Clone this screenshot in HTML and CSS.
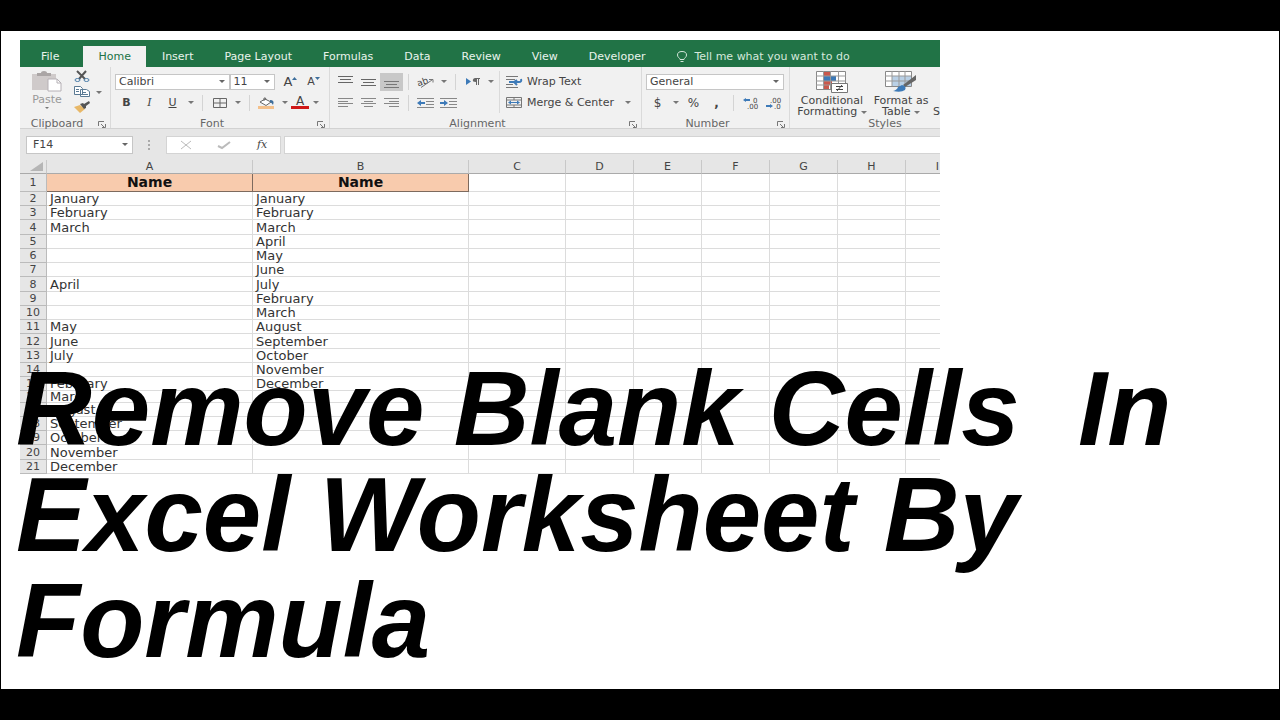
FILE: index.html
```
<!DOCTYPE html>
<html lang="en">
<head>
    <meta charset="UTF-8">
    <meta name="viewport" content="width=device-width, initial-scale=1.0">
    <title>Remove Blank Cells In Excel Worksheet By Formula</title>
    <link rel="stylesheet" href="styles.css">
</head>

<body>
    <main class="slide">
        <section class="excel">
            <nav class="tabs">
                <button class="tab file">File</button>
                <button class="tab active">Home</button>
                <button class="tab">Insert</button>
                <button class="tab">Page Layout</button>
                <button class="tab">Formulas</button>
                <button class="tab">Data</button>
                <button class="tab">Review</button>
                <button class="tab">View</button>
                <button class="tab">Developer</button>
                <button class="tab tell">
                    <svg width="12" height="12" viewBox="0 0 12 12" fill="none" stroke="#d5e8dc"><path d="M4 8.500C4 7 1.500 6.500 1.500 4A4.500 3.500 0 0 1 10.500 4C10.500 6.500 8 7 8 8.500ZM4.500 10.500h3"/></svg>
                    Tell me what you want to do
                </button>
            </nav>

            <div class="ribbon">
                <!-- clipboard -->
                <div class="group clipboard">
                    <div class="tools">
                        <button class="paste">
                            <svg width="32" height="21" viewBox="0 0 32 21"><path fill="#cfcaca" d="M1 3h24v16H1z"/><path fill="#aaa5a5" d="M6 2h4q0-2 3-2t3 2h4v3H6z"/><path fill="#fff" stroke="#b5b0b5" d="M17 8h9l4 4v8H17z"/><path fill="none" stroke="#b5b0b5" d="M26 8v4h4"/></svg>
                            Paste
                            <span class="caret"></span>
                        </button>
                        <div class="clips">
                            <button aria-label="Cut"><svg width="16" height="12" viewBox="0 0 16 12" fill="none"><path stroke="#555" stroke-width="2" d="M3 0l8 8M12 0L5 8"/><ellipse cx="3.500" cy="9" rx="2.500" ry="1.500" stroke="#4a7ca8"/><ellipse cx="12.500" cy="9" rx="2.500" ry="1.500" stroke="#4a7ca8"/></svg></button>
                            <button aria-label="Copy"><svg width="16" height="12" viewBox="0 0 16 12" fill="#fff" stroke="#5b7a94"><path d="M.5.5h6l2 2v6h-8zM6.500 3.500h6l3 2v5h-9z"/><path d="M2 3.500h3M2 5.500h3M8 6.500h4M8 8.500h6"/></svg><span class="caret"></span></button>
                            <button aria-label="Format Painter"><svg width="16" height="12" viewBox="0 0 16 12"><path fill="#e8b868" d="M0 6l6-2 5 4-5 4z"/><path fill="#555" d="M6 3l3-1 1 1 5-3 1 2-4 3v2l-2 1z"/></svg></button>
                        </div>
                    </div>
                    <div class="foot"><span>Clipboard</span><button class="launch" aria-label="Clipboard options"><svg width="8" height="7" viewBox="0 0 8 7" fill="none" stroke="#777"><path d="M.5 5V.5H6M3 3l3 3M7.500 3v3.500H4"/></svg></button></div>
                </div>

                <!-- font -->
                <div class="group font">
                    <div class="row">
                        <select class="family" aria-label="Font"><option>Calibri</option></select>
                        <select class="size" aria-label="Font size"><option>11</option></select>
                        <button class="tool grow" aria-label="Increase font size">A<svg width="5" height="4" viewBox="0 0 5 4"><path fill="#3d6e9c" d="M0 3l2.500-3L5 3z"/></svg></button>
                        <button class="tool shrink" aria-label="Decrease font size">A<svg width="5" height="4" viewBox="0 0 5 4"><path fill="#3d6e9c" d="M0 0h5L2.500 3z"/></svg></button>
                    </div>
                    <div class="row">
                        <button class="tool bold">B</button>
                        <button class="tool italic">I</button>
                        <button class="tool underline">U</button>
                        <button class="drop" aria-label="Underline styles"><span class="caret"></span></button>
                        <i class="line"></i>
                        <button class="tool" aria-label="Borders"><svg width="14" height="10" viewBox="0 0 14 10" fill="none" stroke="#666"><path d="M.5.5h13v9H.5zM7 0v10M0 5h14"/></svg></button>
                        <button class="drop" aria-label="Border styles"><span class="caret"></span></button>
                        <i class="line"></i>
                        <button class="tool" aria-label="Fill color"><svg width="17" height="12" viewBox="0 0 17 12"><path fill="#fff" stroke="#666" d="M2 5l5-3 6 3-5 3.500zM6 4V1q2-1 2 2"/><path fill="#3d6e9c" d="M12 3q5 0 3 5-1-2-3-3z"/><path fill="#f4c08a" d="M0 9h16v3H0z"/></svg></button>
                        <button class="drop" aria-label="Fill colors"><span class="caret"></span></button>
                        <button class="tool color">A</button>
                        <button class="drop" aria-label="Font colors"><span class="caret"></span></button>
                    </div>
                    <div class="foot"><span>Font</span><button class="launch" aria-label="Font options"><svg width="8" height="7" viewBox="0 0 8 7" fill="none" stroke="#777"><path d="M.5 5V.5H6M3 3l3 3M7.500 3v3.500H4"/></svg></button></div>
                </div>

                <!-- alignment -->
                <div class="group alignment">
                    <div class="tools">
                        <div class="aligns">
                            <div class="row">
                                <button class="tool" aria-label="Top align"><svg width="15" height="12" viewBox="0 0 15 12" stroke="#666"><path d="M0 .5h15M2 3.500h11M0 6.500h15"/></svg></button>
                                <button class="tool" aria-label="Middle align"><svg width="15" height="12" viewBox="0 0 15 12" stroke="#666"><path d="M0 3.500h15M2 6.500h11M0 9.500h15"/></svg></button>
                                <button class="tool pressed" aria-label="Bottom align"><svg width="15" height="12" viewBox="0 0 15 12" stroke="#777"><path d="M0 5.500h15M2 8.500h11M0 11.500h15"/></svg></button>
                                <i class="line"></i>
                                <button class="tool" aria-label="Orientation"><svg width="17" height="12" viewBox="0 0 17 12"><text x="0" y="9" font-size="9" transform="rotate(-20 5 6)" fill="#444">ab</text><path fill="none" stroke="#777" d="M4 11.500L15 4M12 3.500h4v3"/></svg></button>
                                <button class="drop" aria-label="Orientations"><span class="caret"></span></button>
                                <i class="line"></i>
                                <button class="tool" aria-label="Text direction"><svg width="14" height="8" viewBox="0 0 14 8"><path fill="#3d7ab8" d="M0 0l5 3.500L0 7z"/><path fill="#666" d="M14 0v1h-1v6h-1V1h-1v6h-1V4Q6 4 7 1.500 7.500 0 9 0z"/></svg></button>
                                <button class="drop" aria-label="Text directions"><span class="caret"></span></button>
                            </div>
                            <div class="row">
                                <button class="tool" aria-label="Align left"><svg width="15" height="9" viewBox="0 0 15 9" stroke="#888"><path d="M0 .5h15M0 3.500h10M0 5.500h15M0 8.500h10"/></svg></button>
                                <button class="tool" aria-label="Center"><svg width="15" height="9" viewBox="0 0 15 9" stroke="#888"><path d="M0 .5h15M3 3.500h9M0 5.500h15M3 8.500h9"/></svg></button>
                                <button class="tool" aria-label="Align right"><svg width="15" height="9" viewBox="0 0 15 9" stroke="#888"><path d="M0 .5h15M5 3.500h10M0 5.500h15M5 8.500h10"/></svg></button>
                                <i class="line"></i>
                                <button class="tool" aria-label="Decrease indent"><svg width="17" height="10" viewBox="0 0 17 10"><path stroke="#888" d="M0 .5h17M9 3.500h8M9 6.500h8M0 9.500h17"/><path fill="#3d7ab8" d="M0 5l4-3v2h4v2H4v2z"/></svg></button>
                                <button class="tool" aria-label="Increase indent"><svg width="17" height="10" viewBox="0 0 17 10"><path stroke="#888" d="M0 .5h17M9 3.500h8M9 6.500h8M0 9.500h17"/><path fill="#3d7ab8" d="M8 5L4 2v2H0v2h4v2z"/></svg></button>
                            </div>
                        </div>
                        <div class="wraps">
                            <div class="row"><button class="wide"><svg width="17" height="12" viewBox="0 0 17 12" fill="none"><path stroke="#777" d="M0 .5h12M0 3.500h9M0 8.500h7M0 11.500h12"/><path stroke="#3d7ab8" stroke-width="2" d="M3 6h10q3 0 2-3M11 4L8 6l3 3"/></svg>Wrap Text</button></div>
                            <div class="row"><button class="wide"><svg width="17" height="11" viewBox="0 0 17 11" fill="none"><path stroke="#777" d="M.5.5h15v10H.5zM0 3h16M0 8h16M8 0v3M8 8v3"/><path fill="#3d7ab8" d="M2 5.500l3-2v4zM14 5.500l-3-2v4z"/><path stroke="#3d7ab8" d="M4 5.500h8"/></svg>Merge &amp; Center</button><button class="drop" aria-label="Merge options"><span class="caret"></span></button></div>
                        </div>
                    </div>
                    <div class="foot"><span>Alignment</span><button class="launch" aria-label="Alignment options"><svg width="8" height="7" viewBox="0 0 8 7" fill="none" stroke="#777"><path d="M.5 5V.5H6M3 3l3 3M7.500 3v3.500H4"/></svg></button></div>
                </div>

                <!-- number -->
                <div class="group number">
                    <div class="row"><select class="format" aria-label="Number format"><option>General</option></select></div>
                    <div class="row">
                        <button class="tool">$</button>
                        <button class="drop" aria-label="Currencies"><span class="caret"></span></button>
                        <button class="tool">%</button>
                        <button class="tool comma">,</button>
                        <i class="line"></i>
                        <button class="tool" aria-label="Increase decimal"><svg width="16" height="12" viewBox="0 0 16 12" font-size="7" fill="#444"><path fill="#3d7ab8" d="M0 3l3-2v1h4v2H3v1z"/><text x="10" y="6">0</text><text x="4" y="12">.00</text></svg></button>
                        <button class="tool" aria-label="Decrease decimal"><svg width="16" height="12" viewBox="0 0 16 12" font-size="7" fill="#444"><path fill="#3d7ab8" d="M7 9L4 7v1H0v2h4v1z"/><text x="4" y="6">.00</text><text x="8" y="12">.0</text></svg></button>
                    </div>
                    <div class="foot"><span>Number</span><button class="launch" aria-label="Number options"><svg width="8" height="7" viewBox="0 0 8 7" fill="none" stroke="#777"><path d="M.5 5V.5H6M3 3l3 3M7.500 3v3.500H4"/></svg></button></div>
                </div>

                <!-- styles -->
                <div class="group styles">
                    <div class="tools">
                        <button class="big conditional">
                            <svg width="32" height="22" viewBox="0 0 32 22"><path fill="#fff" stroke="#888" d="M.5.500h29v18H.5z"/><path fill="#c9584c" d="M8 1h6v4H8zM8 10h8v4H8zM8 14h5v4H8z"/><path fill="#3d7ab8" d="M8 5h12v5H8z"/><path fill="none" stroke="#999" d="M7.500 0v18M14.500 0v18M22.500 0v18M0 5h30M0 10h30M0 14h30"/><path fill="#fff" stroke="#777" d="M15.500 12.500h16v9h-16z"/><path stroke="#444" d="M20 15.500h7M20 18.500h7M21 20l5-6"/></svg>
                            <span>Conditional</span><span>Formatting <span class="caret"></span></span>
                        </button>
                        <button class="big table">
                            <svg width="32" height="22" viewBox="0 0 32 22"><path fill="#fff" stroke="#888" d="M.5.500h26v15H.5z"/><path fill="#b9d0e6" d="M7 5h19v10H7z"/><path fill="none" stroke="#999" d="M7 0v15M14 0v15M20 0v15M0 5h26M0 10h26"/><path fill="#666" d="M31 4v5l-11 7-2-2z"/><path fill="#3d7ab8" d="M17 14q5 1 3 5-4 3-12 1 4-1 5-4z"/></svg>
                            <span>Format as</span><span>Table <span class="caret"></span></span>
                        </button>
                        <button class="big cells">
                            <svg width="20" height="22" viewBox="0 0 20 22"><path fill="#fff" stroke="#777" d="M1.500.5h18v14h-18z"/></svg>
                            <span>&nbsp;</span><span>Styles</span>
                        </button>
                    </div>
                    <div class="foot"><span>Styles</span></div>
                </div>
            </div>

            <div class="formula-bar">
                <select class="cell-name" aria-label="Name box"><option>F14</option></select>
                <svg class="dots" width="2" height="10" viewBox="0 0 2 10" fill="#aaa"><path d="M0 0h2v2H0zM0 4h2v2H0zM0 8h2v2H0z"/></svg>
                <div class="entry">
                    <button aria-label="Cancel"><svg width="12" height="8" viewBox="0 0 12 8" stroke="#bbb"><path d="M1 0l10 8M11 0L1 8"/></svg></button>
                    <button aria-label="Enter"><svg width="14" height="8" viewBox="0 0 14 8" fill="none" stroke="#bbb" stroke-width="2"><path d="M1 5l4 2 8-6"/></svg></button>
                    <button class="fx">fx</button>
                </div>
                <input type="text" aria-label="Formula">
            </div>

            <table class="sheet">
                <colgroup>
                    <col class="c-num"><col class="c-a"><col class="c-b"><col class="c-c"><col class="c-n"><col class="c-n"><col class="c-n"><col class="c-n"><col class="c-n"><col>
                </colgroup>
                <thead>
                    <tr><th class="corner"><svg width="13" height="9" viewBox="0 0 13 9"><path fill="#b5b5b5" d="M13 0v9H0z"/></svg></th><th>A</th><th>B</th><th>C</th><th>D</th><th>E</th><th>F</th><th>G</th><th>H</th><th class="last">I</th></tr>
                </thead>
                <tbody>
                    <tr class="names"><th>1</th><td>Name</td><td>Name</td><td></td><td></td><td></td><td></td><td></td><td></td><td></td></tr>
                    <tr><th>2</th><td>January</td><td>January</td><td></td><td></td><td></td><td></td><td></td><td></td><td></td></tr>
                    <tr><th>3</th><td>February</td><td>February</td><td></td><td></td><td></td><td></td><td></td><td></td><td></td></tr>
                    <tr><th>4</th><td>March</td><td>March</td><td></td><td></td><td></td><td></td><td></td><td></td><td></td></tr>
                    <tr><th>5</th><td></td><td>April</td><td></td><td></td><td></td><td></td><td></td><td></td><td></td></tr>
                    <tr><th>6</th><td></td><td>May</td><td></td><td></td><td></td><td></td><td></td><td></td><td></td></tr>
                    <tr><th>7</th><td></td><td>June</td><td></td><td></td><td></td><td></td><td></td><td></td><td></td></tr>
                    <tr><th>8</th><td>April</td><td>July</td><td></td><td></td><td></td><td></td><td></td><td></td><td></td></tr>
                    <tr><th>9</th><td></td><td>February</td><td></td><td></td><td></td><td></td><td></td><td></td><td></td></tr>
                    <tr><th>10</th><td></td><td>March</td><td></td><td></td><td></td><td></td><td></td><td></td><td></td></tr>
                    <tr><th>11</th><td>May</td><td>August</td><td></td><td></td><td></td><td></td><td></td><td></td><td></td></tr>
                    <tr><th>12</th><td>June</td><td>September</td><td></td><td></td><td></td><td></td><td></td><td></td><td></td></tr>
                    <tr><th>13</th><td>July</td><td>October</td><td></td><td></td><td></td><td></td><td></td><td></td><td></td></tr>
                    <tr><th>14</th><td></td><td>November</td><td></td><td></td><td></td><td></td><td></td><td></td><td></td></tr>
                    <tr><th>15</th><td>February</td><td>December</td><td></td><td></td><td></td><td></td><td></td><td></td><td></td></tr>
                    <tr class="short"><th>16</th><td>March</td><td></td><td></td><td></td><td></td><td></td><td></td><td></td><td></td></tr>
                    <tr><th>17</th><td>August</td><td></td><td></td><td></td><td></td><td></td><td></td><td></td><td></td></tr>
                    <tr><th>18</th><td>September</td><td></td><td></td><td></td><td></td><td></td><td></td><td></td><td></td></tr>
                    <tr><th>19</th><td>October</td><td></td><td></td><td></td><td></td><td></td><td></td><td></td><td></td></tr>
                    <tr><th>20</th><td>November</td><td></td><td></td><td></td><td></td><td></td><td></td><td></td><td></td></tr>
                    <tr><th>21</th><td>December</td><td></td><td></td><td></td><td></td><td></td><td></td><td></td><td></td></tr>
                </tbody>
            </table>
        </section>

        <h1>Remove Blank Cells  In Excel Worksheet By Formula</h1>
    </main>
</body>
</html>
```

FILE: styles.css
```
* {
    box-sizing: border-box;
}
body {
    margin: 0;
    padding: 31px 1px;
    background-color: #000;
    font-family: "DejaVu Sans", Verdana, sans-serif;
    font-size: 11px;
    color: #444;
}
.slide {
    position: relative;
    min-height: calc(100vh - 62px);
    padding: 9px 19px;
    background-color: #fff;
}
/* title lies over the lower part of the sheet */
h1 {
    position: absolute;
    top: 325px;
    left: 15px;
    right: 0;
    margin: 0;
    font-family: "Liberation Sans", Arial, sans-serif;
    font-size: 105px;
    line-height: 106px;
    font-style: italic;
    font-weight: bold;
    color: #000;
    white-space: pre-wrap;
}
.excel {
    width: 920px;
    max-width: 100%;
    overflow: hidden;
    background-color: #e6e6e6;
}
button {
    display: flex;
    align-items: center;
    justify-content: center;
    flex-shrink: 0;
    padding: 0;
    border: none;
    background: none;
    font: inherit;
    color: inherit;
    white-space: nowrap;
}
svg {
    overflow: visible;
}
select {
    height: 16px;
    padding: 0 3px;
    border: 1px solid #c6c6c6;
    border-radius: 0;
    appearance: none;
    background: #fff url("data:image/svg+xml,%3Csvg xmlns='http://www.w3.org/2000/svg' width='6' height='3'%3E%3Cpath fill='%23666' d='M0 0h6L3 3z'/%3E%3C/svg%3E") no-repeat right 4px center;
    font: inherit;
    color: #444;
}
.caret {
    display: inline-block;
    border: 3px solid transparent;
    border-top-color: #777;
    border-bottom: none;
    vertical-align: middle;
}

/* tabs */
.tabs {
    display: flex;
    gap: 1px;
    height: 27px;
    padding: 6px 6px 0;
    background-color: #217346;
    color: #e9f3ed;
}
.tab {
    padding: 0 15px;
}
.tab.file {
    margin-right: 8px;
}
.tab.active {
    background-color: #f1f1f1;
    color: #217346;
}
.tab.tell {
    gap: 6px;
    color: #d5e8dc;
}

/* ribbon */
.ribbon {
    display: flex;
    height: 62px;
    background-color: #f1f1f1;
    border-bottom: 1px solid #d2d2d2;
}
.group {
    flex-shrink: 0;
    padding: 4px 4px 0;
    border-right: 1px solid #dadada;
}
.group.clipboard {
    width: 91px;
}
.group.font {
    width: 219px;
}
.group.alignment {
    width: 312px;
}
.group.number {
    width: 148px;
}
.group.styles {
    width: 190px;
    border: none;
}
.tools {
    display: flex;
    height: 42px;
}
.row {
    display: flex;
    align-items: center;
    height: 21px;
}
.foot {
    display: flex;
    align-items: center;
    margin-top: 5px;
    line-height: 12px;
    color: #666;
}
.foot span {
    flex: 1;
    padding-right: 8px;
    text-align: center;
}
.styles .foot span {
    padding: 0;
}
.tool {
    width: 23px;
    height: 18px;
}
.drop {
    width: 13px;
    height: 18px;
}
.line {
    width: 1px;
    height: 16px;
    margin: 0 5px;
    background-color: #d4d4d4;
}
.paste {
    flex-direction: column;
    justify-content: flex-start;
    gap: 1px;
    width: 46px;
    color: #999;
}
.paste .caret {
    border-width: 2px;
    border-bottom: none;
}
.clips {
    display: flex;
    flex-direction: column;
    align-items: flex-start;
    justify-content: space-between;
    padding-left: 4px;
}
.clips .caret {
    margin-left: 6px;
}
.family {
    width: 116px;
}
.size {
    width: 46px;
    margin-right: 4px;
}
.grow {
    font-size: 13px;
}
.grow svg,
.shrink svg {
    margin-bottom: 6px;
}
.bold {
    font-weight: bold;
}
.italic {
    font-style: italic;
    font-family: "DejaVu Serif", serif;
}
.underline {
    text-decoration: underline;
}
.tool.color {
    width: 18px;
    height: 12px;
    font-size: 12px;
    line-height: 10px;
    border-bottom: 3px solid #d01818;
}
.pressed {
    background-color: #c8c8c8;
}
.aligns {
    width: 165px;
}
.wraps {
    padding-left: 6px;
    border-left: 1px solid #dadada;
}
.wide {
    gap: 4px;
}
.wraps .drop {
    margin-left: 8px;
}
.format {
    width: 138px;
}
.number .tool {
    font-size: 12px;
}
.number .comma {
    font-weight: bold;
}
.big {
    flex-direction: column;
    justify-content: flex-start;
    line-height: 11px;
}
.big svg {
    margin-bottom: 2px;
}
.conditional {
    width: 76px;
}
.table {
    width: 62px;
}
.cells {
    margin-left: 1px;
}

/* formula bar */
.formula-bar {
    display: flex;
    align-items: center;
    height: 31px;
    padding-left: 6px;
}
.cell-name {
    width: 107px;
    height: 18px;
    padding: 0 6px;
}
.dots {
    margin: 0 16px 0 15px;
}
.entry {
    display: flex;
    justify-content: space-around;
    width: 115px;
    height: 18px;
    border: 1px solid #d4d4d4;
    background-color: #fff;
}
.fx {
    font-family: "DejaVu Serif", serif;
    font-style: italic;
}
.formula-bar input {
    flex: 1;
    min-width: 0;
    height: 18px;
    margin-left: 3px;
    border: 1px solid #d4d4d4;
    border-right: none;
    font: inherit;
}

/* sheet */
.sheet {
    width: 100%;
    table-layout: fixed;
    border-collapse: separate;
    border-spacing: 0;
    background-color: #fff;
    font-size: 13px;
    line-height: 13px;
    color: #333;
}
.c-num {
    width: 27px;
}
.c-a {
    width: 206px;
}
.c-b {
    width: 216px;
}
.c-c {
    width: 97px;
}
.c-n {
    width: 68px;
}
.sheet th,
.sheet td {
    height: 14px;
    padding: 0 3px;
    border-right: 1px solid #dcdcdc;
    border-bottom: 1px solid #dcdcdc;
    text-align: left;
    white-space: nowrap;
}
.sheet th {
    padding: 0;
    background-color: #e6e6e6;
    border-color: #bbb;
    font-size: 11px;
    font-weight: normal;
    text-align: center;
    color: #444;
}
.sheet thead th {
    border-right-color: #c8c8c8;
    border-bottom-color: #aaa;
}
.sheet thead .corner {
    padding-right: 3px;
    text-align: right;
}
.corner svg {
    display: block;
    margin-left: auto;
}
.sheet thead .last {
    padding-right: 1px;
    border-right: none;
    text-align: right;
}
.sheet td:last-child {
    border-right: none;
}
.sheet tbody tr:nth-child(4n) > * {
    height: 15px;
}
.sheet tbody .names > * {
    height: 18px;
}
.names td:nth-child(2),
.names td:nth-child(3) {
    background-color: #f8cbad;
    border-color: #7d6a5e;
    font-size: 14px;
    font-weight: bold;
    text-align: center;
    color: #111;
}
.sheet tbody tr.short > * {
    height: 12px;
    line-height: 11px;
}
```
